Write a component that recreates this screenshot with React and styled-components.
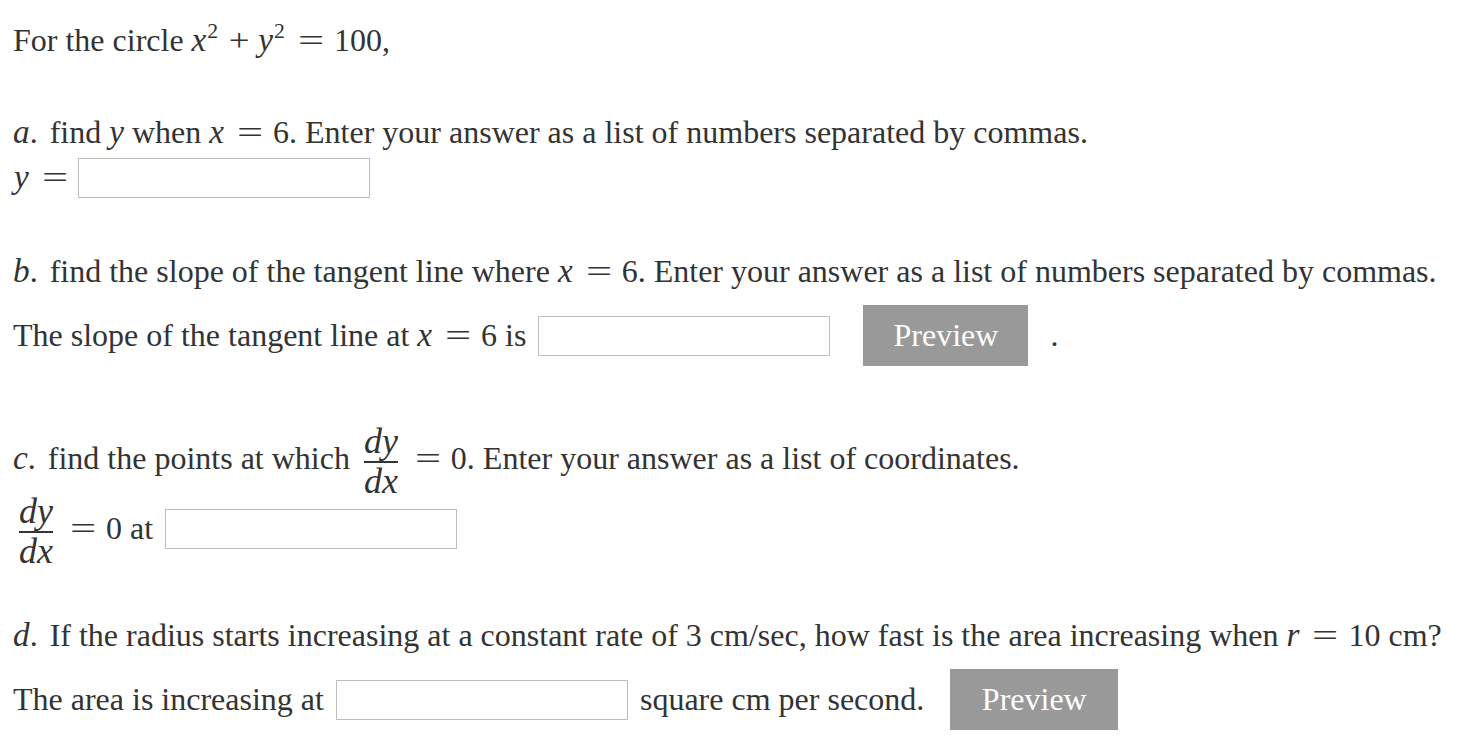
import React from "react";
import styled, { createGlobalStyle } from "styled-components";

const GlobalStyle = createGlobalStyle`
  body {
    margin: 0;
    background: #fff;
    color: #333;
    font-family: "Liberation Serif", "Times New Roman", serif;
  }
`;

const Page = styled.div`
  padding: 24px 13px 0 13px;
  font-size: 32px;
`;

const Line = styled.div`
  white-space: nowrap;
  margin-top: ${(p) => p.$top || 0}px;
  height: ${(p) => p.$h || 32}px;
  line-height: ${(p) => p.$h || 32}px;
`;

const V = styled.i`
  font-style: italic;
  font-family: "Liberation Serif", serif;
  font-size: 1.04em;
`;

// relation / binary operator, stretched a little to match the math font
const Op = styled.span`
  display: inline-block;
  width: 18px;
  text-align: center;
  transform: scaleX(${(p) => (p.$bin ? 1.15 : 1.45)});
  margin-left: ${(p) => (p.$bin ? 12 : 17)}px;
  margin-right: ${(p) => (p.$bin ? 10 : 14)}px;
`;

const Sup = styled.sup`
  font-size: 0.68em;
  line-height: 0;
  vertical-align: 0.62em;
  margin-left: 1px;
`;

const Gap = styled.span`
  display: inline-block;
  width: ${(p) => p.$w}px;
`;

const Frac = styled.span`
  display: inline-flex;
  flex-direction: column;
  align-items: center;
  vertical-align: middle;
  margin: 0 2px;
  padding: 0 2px;
  line-height: 35px;
  font-size: 1.08em;
`;

const Bar = styled.span`
  align-self: stretch;
  height: 1.5px;
  background: #333;
  margin: 2px 0 1px;
`;

const Answer = styled.input`
  box-sizing: border-box;
  vertical-align: 3px;
  width: 292px;
  height: 40px;
  border: 1px solid #bdbdbd;
  margin: 0 ${(p) => p.$r || 0}px 0 ${(p) => p.$l || 0}px;
  padding: 0 6px;
  font-size: 22px;
  line-height: normal;
  font-family: "Liberation Serif", serif;
  outline: none;
`;

const PreviewBtn = styled.button`
  box-sizing: border-box;
  vertical-align: baseline;
  width: ${(p) => p.$w || 165}px;
  height: 61px;
  padding: 0;
  border: none;
  background: #999;
  color: #fff;
  font-family: "Liberation Serif", serif;
  font-size: 32px;
  line-height: normal;
  margin-left: ${(p) => p.$l || 0}px;
  cursor: pointer;
`;

const Dot = styled.span`
  margin-left: 22px;
`;

function DyDx() {
  return (
    <Frac>
      <V>dy</V>
      <Bar />
      <V>dx</V>
    </Frac>
  );
}

export default function App() {
  return (
    <Page>
      <GlobalStyle />
      <Line>
        For the circle <V>x</V>
        <Sup>2</Sup>
        <Op $bin>+</Op>
        <V>y</V>
        <Sup>2</Sup>
        <Op>=</Op>100,
      </Line>

      <Line $top={60}>
        <V>a</V>.<Gap $w={12} />
        find <V>y</V> when <V>x</V>
        <Op>=</Op>6. Enter your answer as a list of numbers separated by commas.
      </Line>
      <Line $top={9} $h={40}>
        <Gap $w={1} />
        <V>y</V>
        <Op>=</Op>
        <Answer $l={0} />
      </Line>

      <Line $top={58}>
        <V>b</V>.<Gap $w={12} />
        find the slope of the tangent line where <V>x</V>
        <Op>=</Op>6. Enter your answer as a list of numbers separated by commas.
      </Line>
      <Line $top={17} $h={61}>
        The slope of the tangent line at <V>x</V>
        <Op>=</Op>6 is
        <Answer $l={12} $r={33} />
        <PreviewBtn>Preview</PreviewBtn>
        <Dot>.</Dot>
      </Line>

      <Line $top={55} $h={76}>
        <V>c</V>.<Gap $w={12} />
        find the points at which
        <Gap $w={10} />
        <DyDx />
        <Op>=</Op>0. Enter your answer as a list of coordinates.
      </Line>
      <Line $top={-3} $h={70}>
        <Gap $w={2} />
        <DyDx />
        <Op>=</Op>0 at
        <Answer $l={12} />
      </Line>

      <Line $top={56}>
        <V>d</V>.<Gap $w={12} />
        If the radius starts increasing at a constant rate of 3 cm/sec, how fast is the area increasing when <V>r</V>
        <Op>=</Op>10 cm?
      </Line>
      <Line $top={18} $h={61}>
        The area is increasing at
        <Answer $l={12} $r={12} />
        square cm per second.
        <PreviewBtn $l={26} $w={168}>Preview</PreviewBtn>
      </Line>
    </Page>
  );
}
